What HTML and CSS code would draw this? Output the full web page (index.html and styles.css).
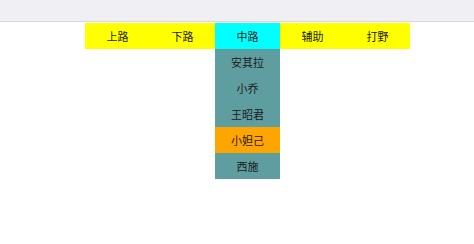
FILE: index.html
```html
<!DOCTYPE html>
<html>
<head>
<meta charset="utf-8">
<link rel="stylesheet" href="styles.css">
</head>
<body>
<div class="topbar"></div>
<ul class="nav">
  <li class="nav-item"><div class="label">上路</div></li>
  <li class="nav-item"><div class="label">下路</div></li>
  <li class="nav-item active"><div class="label">中路</div>
    <ul class="sub">
      <li class="sub-item">安其拉</li>
      <li class="sub-item">小乔</li>
      <li class="sub-item">王昭君</li>
      <li class="sub-item hover">小妲己</li>
      <li class="sub-item">西施</li>
    </ul>
  </li>
  <li class="nav-item"><div class="label">辅助</div></li>
  <li class="nav-item"><div class="label">打野</div></li>
</ul>
</body>
</html>
```
FILE: styles.css
```css
html, body {
  margin: 0;
  padding: 0;
  background: #fff;
  font-family: "Noto Sans CJK SC", "Noto Sans", sans-serif;
  font-size: 11px;
  color: #1a1a1a;
}
.topbar {
  height: 21px;
  background: #f0f0f4;
  border-bottom: 1px solid #d8d8dc;
}
.nav {
  list-style: none;
  margin: 1px 0 0 85px;
  padding: 0;
  display: flex;
  align-items: flex-start;
  width: 325px;
}
.nav-item {
  width: 65px;
  display: flex;
  flex-direction: column;
}
.label {
  height: 26px;
  line-height: 26px;
  text-align: center;
  background: #ffff00;
}
.nav-item.active .label {
  background: #00ffff;
}
.sub {
  margin: 0;
  padding: 0;
  list-style: none;
  background: #5f9ea0;
}
.sub-item {
  height: 26px;
  line-height: 26px;
  text-align: center;
}
.sub-item.hover {
  background: #ffa500;
}
```
